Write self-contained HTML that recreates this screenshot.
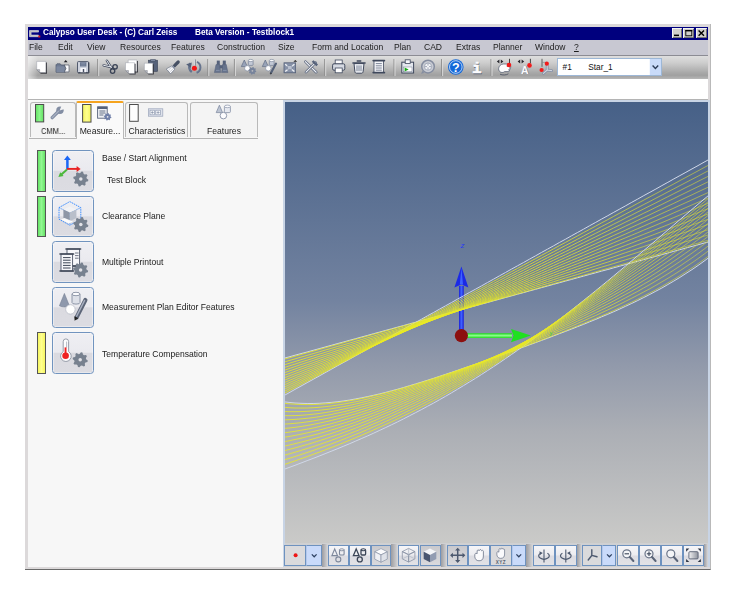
<!DOCTYPE html>
<html>
<head>
<meta charset="utf-8">
<title>Calypso User Desk</title>
<style>
html,body{margin:0;padding:0;background:#fff;}
body{width:737px;height:600px;overflow:hidden;position:relative;font-family:"Liberation Sans",sans-serif;font-size:9px;color:#222;}
.abs{position:absolute;}
.itxt,#menubar span,.tab .lbl,#title span{will-change:transform;}
#frame{left:25px;top:24px;width:686px;height:546px;background:#dcd9da;box-sizing:border-box;border-right:1px solid #b9b9b9;border-bottom:1px solid #6a6a6a;}
#title{left:28px;top:27px;width:680px;height:12.5px;background:#00007e;color:#fff;font-weight:bold;font-size:8.2px;line-height:12.5px;white-space:pre;}
#menubar{left:28px;top:39.5px;width:680px;height:15.5px;background:#c8c8d2;border-bottom:1px solid #8c8c94;}
#menubar span{position:absolute;top:.6px;line-height:15px;font-size:8.55px;color:#1c1c1c;white-space:pre;}
#toolbar{left:28px;top:56px;width:680px;height:23px;background:linear-gradient(#dedede 0%,#cdcdcd 30%,#a9a9a9 72%,#a0a0a0 84%,#b7b7b7 100%);}
#whiteband{left:28px;top:79px;width:680px;height:20px;background:#fff;border-bottom:1px solid #b4b4b4;}
#leftpanel{left:28px;top:100px;width:255.3px;height:467px;background:#f7f7f7;}
#view{left:285px;top:102px;width:423px;height:441px;background:linear-gradient(#466087 0%,#7383a0 45%,#929aab 60%,#acafb5 75%,#cacac8 100%);overflow:hidden;}
#viewborder{left:283.3px;top:100px;width:426.4px;height:467.2px;background:#c8d4e5;}
#btoolbar{left:285px;top:543px;width:423px;height:24px;background:#cfd0d2;}
.sep{position:absolute;top:3px;width:1px;height:17px;background:#8f8f8f;border-right:1px solid #e6e6e6;}
.tab{position:absolute;top:102px;height:35px;box-sizing:border-box;border:1px solid #b9b9b9;border-bottom:none;border-radius:3px 3px 0 0;background:#f4f4f4;}
.tab .lbl{position:absolute;left:0;right:0;top:19.5px;text-align:center;font-size:8.6px;line-height:11px;color:#222;}
.ind{position:absolute;width:7px;height:15px;border:1px solid #555;top:2px;}
.bar{position:absolute;left:37.5px;width:8px;border:1px solid #555;box-sizing:border-box;}
.btn{position:absolute;left:52.1px;width:42.2px;height:42px;box-sizing:border-box;border:1.4px solid #7194bf;border-radius:3.5px;background:linear-gradient(#efeff3 0%,#eaeaef 48%,#dadae0 51%,#dcdce2 100%);box-shadow:inset 0 0 0 .6px rgba(255,255,255,.7);}
.itxt{position:absolute;font-size:8.55px;line-height:11px;color:#1a1a1a;white-space:pre;}
.bb{position:absolute;top:2px;height:20px;box-sizing:border-box;border:1px solid #6e92bf;background:linear-gradient(#f5f5f8 0%,#ececf0 48%,#dcdce2 52%,#e2e2e6 100%);}
.bb.on{background:linear-gradient(#c9c9cd 0%,#d9d9dd 100%);}
.bb.dd{background:#c9dafa;border-left-color:#b4c8ec;}
.bb.flat{background:#dadadc;}
</style>
</head>
<body>
<div id="frame" class="abs"></div>
<div id="title" class="abs"><svg class="abs" style="left:.4px;top:1.2px" width="13" height="11" viewBox="0 0 13 11"><path d="M1.5 2.5h9v1.6h-7.4v3h7.4v1.6h-9z" fill="#b8b8b8" stroke="#e8e8e8" stroke-width=".6"/><rect x="10.3" y="7.5" width="2" height="2" fill="#e02020"/></svg><span class="abs" style="left:14.6px;top:0">Calypso User Desk - (C) Carl Zeiss</span><span class="abs" style="left:166.8px;top:0">Beta Version - Testblock1</span>
<div class="abs" style="left:644px;top:1.4px;width:10.20px;height:9.4px;background:#d2d0cc;box-shadow:inset .8px .8px 0 #fff, inset -.8px -.8px 0 #5a5a5a"></div>
<div class="abs" style="left:655.4px;top:1.4px;width:10.60px;height:9.4px;background:#d2d0cc;box-shadow:inset .8px .8px 0 #fff, inset -.8px -.8px 0 #5a5a5a"></div>
<div class="abs" style="left:668px;top:1.4px;width:10.60px;height:9.4px;background:#d2d0cc;box-shadow:inset .8px .8px 0 #fff, inset -.8px -.8px 0 #5a5a5a"></div>
<svg class="abs" style="left:640px;top:0" width="40" height="12.5" viewBox="668 27 40 12.5">
<rect x="674" y="34.6" width="5" height="1.5" fill="#000"/>
<rect x="685.8" y="30.4" width="6" height="5.4" fill="none" stroke="#000" stroke-width=".9"/><rect x="685.4" y="30" width="6.8" height="1.4" fill="#000"/>
<path d="M698.6 30.4l5.4 5.4M704 30.4l-5.4 5.4" stroke="#000" stroke-width="1.4"/>
</svg>
</div>
<div id="menubar" class="abs">
<span style="left:0.6px">File</span><span style="left:29.7px">Edit</span><span style="left:58.7px">View</span><span style="left:92.0px">Resources</span><span style="left:143.3px">Features</span><span style="left:188.8px">Construction</span><span style="left:249.7px">Size</span><span style="left:284.2px">Form and Location</span><span style="left:366.4px">Plan</span><span style="left:396.1px">CAD</span><span style="left:427.9px">Extras</span><span style="left:465.3px">Planner</span><span style="left:507.2px">Window</span><span style="left:546px;text-decoration:underline">?</span>
</div>
<div id="toolbar" class="abs">
<svg width="680" height="23" viewBox="28 56 680 23" style="position:absolute;left:0;top:0">
<defs><linearGradient id="lf" x1="0" x2="1" y1="0" y2="0"><stop offset="0" stop-color="#fff" stop-opacity=".55"/><stop offset="1" stop-color="#fff" stop-opacity="0"/></linearGradient></defs>
<rect x="28" y="56" width="10" height="23" fill="url(#lf)"/>
<path d="M37.80 62.5h9.2v11.2h-6.20l-3 -3z" fill="#24242c" opacity=".85"/><path d="M36.7 61.4h9.2v11.2h-6.20l-3 -3z" fill="#fff" stroke="#8a8f9c" stroke-width=".4"/><path d="M36.7 69.6h3v3z" fill="#b4b8c4" stroke="#555" stroke-width=".3"/>
<path d="M56 72.2v-7.4l1-1h3.2l1 1.2h4v7.2z" fill="#6f7b92" stroke="#4c566c" stroke-width=".7"/>
<path d="M56.4 72v-5.60h8.4v5.6z" fill="#7c889f"/>
<path d="M64.4 65h4.60v6.9h-4.60l1.6-3.4z" fill="#fbfbfd" stroke="#3c4456" stroke-width=".6"/>
<path d="M63.8 62.2l1.9-2.1 1.9 2.1z" fill="#1c1c22"/>
<rect x="77.5" y="61.6" width="11" height="11" rx=".8" fill="#cdd2dd" stroke="#454e62" stroke-width=".9"/>
<rect x="80" y="62.2" width="6.40" height="4.3" fill="#6b7892"/><path d="M81.2 63.4h4M81.2 65h4" stroke="#8f9ab0" stroke-width=".6"/>
<rect x="80.4" y="68" width="5.6" height="4.4" fill="#f6f6fa"/><rect x="82.8" y="69" width="1.4" height="3" fill="#454e62"/>
<path d="M88.9 62.4v10.6h-10.8" fill="none" stroke="#2c3240" stroke-width=".8"/>
<rect x="97.2" y="59" width="1" height="17" fill="#8d8d8d"/><rect x="98.2" y="59" width="1" height="17" fill="#e2e2e2" opacity=".8"/>
<g fill="none" stroke-linecap="round"><path d="M106.8 60.6l4.80 7.6M103.6 65.3l8.6 2" stroke="#3f485c" stroke-width="2.3"/><path d="M106.8 60.6l4.4 7M103.6 65.3l8 1.8" stroke="#e6e9ef" stroke-width="1"/><circle cx="115.1" cy="66.8" r="2.2" stroke="#3a4356" stroke-width="1.3"/><circle cx="112.6" cy="71.1" r="2.2" stroke="#3a4356" stroke-width="1.3"/></g>
<path d="M129.30 61.1h8.7v11.4h-5.70l-3 -3z" fill="#24242c" opacity=".85"/><path d="M128.2 60h8.7v11.4h-5.70l-3 -3z" fill="#fff" stroke="#8a8f9c" stroke-width=".4"/><path d="M128.2 68.4h3v3z" fill="#b4b8c4" stroke="#555" stroke-width=".3"/>
<path d="M126.6 63.80h9v10.8h-6l-3 -3z" fill="#24242c" opacity=".85"/><path d="M125.5 62.7h9v10.8h-6l-3 -3z" fill="#fff" stroke="#8a8f9c" stroke-width=".4"/><path d="M125.5 70.5h3v3z" fill="#b4b8c4" stroke="#555" stroke-width=".3"/>
<rect x="148.4" y="60.2" width="9.2" height="11.2" fill="#56627a" stroke="#3c4558" stroke-width=".6"/><rect x="150.8" y="59.4" width="4.4" height="1.9" fill="#7b879f" stroke="#3c4558" stroke-width=".4"/>
<path d="M145.5 64.3h8.4v10.3h-5.4l-3 -3z" fill="#24242c" opacity=".85"/><path d="M144.4 63.2h8.4v10.3h-5.4l-3 -3z" fill="#fff" stroke="#8a8f9c" stroke-width=".4"/><path d="M144.4 70.5h3v3z" fill="#b4b8c4" stroke="#555" stroke-width=".3"/>
<path d="M178.2 62l-3.6 3.6" stroke="#465064" stroke-width="3.2" stroke-linecap="round"/>
<path d="M172.6 65.2l2.8 2.8-1.2 1.2-2.8-2.8z" fill="#8a94a8"/>
<path d="M171.6 66l3.2 3.2-4.2 4.6-4.4-4.8z" fill="#f8f8fa" stroke="#5a6478" stroke-width=".6"/>
<path d="M168.4 70.2l3.6-3.4M170 71.8l3.4-3.4" stroke="#9aa2b2" stroke-width=".5"/>
<path d="M197 61.8a6 6 0 0 1 -.4 11" fill="none" stroke="#66748e" stroke-width="2"/>
<path d="M191.8 72a6 6 0 0 1 -1.2-8.8" fill="none" stroke="#66748e" stroke-width="2.4"/>
<path d="M186.2 64.2l5.6-1.6-1 5.4z" fill="#56627a"/>
<path d="M194.6 59.4v6.4" stroke="#e8eaee" stroke-width="1.2"/><path d="M195.3 59.4v6.4" stroke="#444c5c" stroke-width=".6"/>
<circle cx="194.4" cy="68.2" r="2.5" fill="#f21818"/>
<rect x="207.3" y="59" width="1" height="17" fill="#8d8d8d"/><rect x="208.3" y="59" width="1" height="17" fill="#e2e2e2" opacity=".8"/>
<path d="M214.4 72.6l1.6-8h3.80l.9 8z" fill="#66738c" stroke="#55617a" stroke-width=".5"/><path d="M221.6 72.6l.9-8h3.8l1.6 8z" fill="#66738c" stroke="#55617a" stroke-width=".5"/><rect x="216.8" y="60.6" width="3" height="4.2" fill="#55617a"/><rect x="222.8" y="60.6" width="3" height="4.2" fill="#55617a"/><rect x="219.6" y="65.2" width="3.2" height="3.2" fill="#55617a"/><path d="M216 70.4h3.60M223 70.4h3.6" stroke="#8c97ad" stroke-width=".8"/>
<rect x="233.9" y="59" width="1" height="17" fill="#8d8d8d"/><rect x="234.9" y="59" width="1" height="17" fill="#e2e2e2" opacity=".8"/>
<path d="M244.3 60l3 6.6h-6z" fill="#98a3b8" stroke="#56627a" stroke-width=".6"/><rect x="248.3" y="60.4" width="4.8" height="5" rx=".8" fill="#c3c9d6" stroke="#66728a" stroke-width=".6"/><ellipse cx="250.70" cy="60.5" rx="2.4" ry="1.1" fill="#fbfbfd" stroke="#66728a" stroke-width=".5"/><circle cx="247.3" cy="68.3" r="2.7" fill="#fdfdfe" stroke="#77839b" stroke-width=".6"/>
<path d="M256.28 71.18 L256.13 71.93 L255.08 72.23 L254.75 72.73 L254.87 73.81 L254.24 74.24 L253.28 73.71 L252.70 73.83 L252.02 74.68 L251.27 74.53 L250.97 73.48 L250.47 73.15 L249.39 73.27 L248.96 72.64 L249.49 71.68 L249.37 71.10 L248.52 70.42 L248.67 69.67 L249.72 69.37 L250.05 68.87 L249.93 67.79 L250.56 67.36 L251.52 67.89 L252.10 67.77 L252.78 66.92 L253.53 67.07 L253.83 68.12 L254.33 68.45 L255.41 68.33 L255.84 68.96 L255.31 69.92 L255.43 70.50z" fill="#77839b"/><circle cx="252.4" cy="70.8" r="0.90" fill="#bcbcc0"/>
<path d="M265.30 60l3 6.6h-6z" fill="#98a3b8" stroke="#56627a" stroke-width=".6"/><rect x="269.30" y="60.4" width="4.8" height="5" rx=".8" fill="#c3c9d6" stroke="#66728a" stroke-width=".6"/><ellipse cx="271.7" cy="60.5" rx="2.4" ry="1.1" fill="#fbfbfd" stroke="#66728a" stroke-width=".5"/><circle cx="268.30" cy="68.3" r="2.7" fill="#fdfdfe" stroke="#77839b" stroke-width=".6"/>
<path d="M276 63.6l-5.2 9.6" stroke="#56627a" stroke-width="2.2" stroke-linecap="round"/><path d="M270.2 74.4l.3-2 1.5.9z" fill="#333"/>
<rect x="284" y="62.8" width="11.6" height="10" fill="#8792a8" stroke="#56627a" stroke-width=".8"/><path d="M285.2 64.2l9.2 7.4M294.4 64.2l-9.2 7.4" stroke="#f0f2f6" stroke-width="1.3"/><rect x="287.6" y="65.8" width="4.4" height="3.8" fill="#b9c0ce" stroke="#66728a" stroke-width=".4"/>
<path d="M293.4 61.8l1.9-1.9 1.9 1.9z" fill="#222"/>
<path d="M305.4 61.6l10.8 10.6" stroke="#56627a" stroke-width="2.6" stroke-linecap="round"/><path d="M305.4 61.6l10.8 10.6" stroke="#eef0f4" stroke-width="1.2" stroke-linecap="round"/>
<path d="M315.6 62.6l-9.6 9.6" stroke="#56627a" stroke-width="2.6" stroke-linecap="round"/><path d="M315.6 62.6l-9.6 9.6" stroke="#eef0f4" stroke-width="1.2" stroke-linecap="round"/>
<path d="M312.6 61l4.6 4.4" stroke="#56627a" stroke-width="2.4"/>
<rect x="324.2" y="59" width="1" height="17" fill="#8d8d8d"/><rect x="325.2" y="59" width="1" height="17" fill="#e2e2e2" opacity=".8"/>
<rect x="335.2" y="60" width="7" height="4.2" fill="#fbfbfd" stroke="#3f485c" stroke-width=".8"/>
<rect x="332.6" y="63.8" width="12.2" height="6.4" rx="1.4" fill="#d5d9e2" stroke="#3f485c" stroke-width="1"/>
<rect x="335.2" y="68" width="7" height="4.8" fill="#fff" stroke="#3f485c" stroke-width=".8"/>
<path d="M354 63.6h10l-.9 8c-.2 1.4-1 1.6-2 1.6h-4.20c-1 0-1.8-.2-2-1.6z" fill="#eef0f5" stroke="#3f485c" stroke-width="1"/><path d="M353 63h12" stroke="#3f485c" stroke-width="1.6" stroke-linecap="round"/><path d="M357.2 61h3.6" stroke="#3f485c" stroke-width="1.3" stroke-linecap="round"/><path d="M357 65.4v5.8M359 65.4v5.8M361 65.4v5.8" stroke="#56627a" stroke-width=".8"/>
<rect x="374" y="60.6" width="9.6" height="12" fill="#f4f5f9" stroke="#3f485c" stroke-width=".8"/><path d="M373.2 60.6h11.2M373.2 72.6h11.2" stroke="#3f485c" stroke-width="1.7" stroke-linecap="round"/><path d="M375.8 63.6h6M375.8 65.8h6M375.8 68h6M375.8 70.2h6" stroke="#56627a" stroke-width=".75"/>
<rect x="393.5" y="59" width="1" height="17" fill="#8d8d8d"/><rect x="394.5" y="59" width="1" height="17" fill="#e2e2e2" opacity=".8"/>
<rect x="401.8" y="62.2" width="11.8" height="10.8" fill="#e4e7ee" stroke="#3f485c" stroke-width="1"/><rect x="405.2" y="59.8" width="5" height="3.8" fill="#f6f6fa" stroke="#3f485c" stroke-width=".8"/><rect x="403.4" y="67" width="8.6" height="4.8" fill="#fff" stroke="#56627a" stroke-width=".4"/><path d="M404.6 67.4l4 2.1-4 2.1z" fill="#18a818"/>
<circle cx="428" cy="66.6" r="6.3" fill="#c9ccd4" stroke="#858da0" stroke-width="1.5"/><circle cx="428" cy="66.6" r="3.6" fill="#f2f3f6" stroke="#8d95a8" stroke-width=".7"/><path d="M428 63.4v6.4M424.8 66.6h6.4" stroke="#8d95a8" stroke-width=".8"/><circle cx="428" cy="66.6" r="1" fill="#fff"/><path d="M422.6 70.8l-1.6 3 3.2-.8z" fill="#858da0"/>
<rect x="441.1" y="59" width="1" height="17" fill="#8d8d8d"/><rect x="442.1" y="59" width="1" height="17" fill="#e2e2e2" opacity=".8"/>
<circle cx="455.8" cy="67" r="7.8" fill="#1468d8"/><circle cx="455.8" cy="67" r="6.3" fill="none" stroke="#fff" stroke-width=".7"/>
<text x="455.8" y="71.6" font-family="Liberation Sans, sans-serif" font-weight="bold" font-size="12.5" fill="#fff" text-anchor="middle">?</text>
<text x="477.5" y="73.6" font-family="Liberation Mono, monospace" font-weight="bold" font-size="15.5" fill="#596275" stroke="#596275" stroke-width=".7" text-anchor="middle">i</text>
<text x="476.8" y="73" font-family="Liberation Mono, monospace" font-weight="bold" font-size="15.5" fill="#fcfcfe" stroke="#fcfcfe" stroke-width=".7" text-anchor="middle">i</text>
<rect x="490.5" y="59" width="1" height="17" fill="#8d8d8d"/><rect x="491.5" y="59" width="1" height="17" fill="#e2e2e2" opacity=".8"/>
<path d="M496.8 61.6l2.6-2v4zM503.40 61.6l-2.6-2v4z" fill="#2a2a30"/>
<path d="M509.5 58.8v4.4" stroke="#333" stroke-width=".9"/>
<path d="M498.6 68.8c0-2.6 2-4.80 5-4.80h5.8c1.4 0 1.4 2 0 2h-2.60h3.2c1.2 0 1.2 1.9 0 1.9h-.6c1.2 0 1.2 1.9 0 1.9h-.8c1 0 1 1.8 0 1.8h-4c-1.40 1.6-6 1.2-6-2.8z" fill="#fdfdfe" stroke="#4a5468" stroke-width=".7"/>
<path d="M500 74.2c2.4 1.2 6.4 1 8.4-.4" stroke="#3a4254" stroke-width="1" fill="none" opacity=".7"/>
<circle cx="509" cy="65" r="2.3" fill="#f21a1a"/>
<path d="M517.6 61.6l2.6-2v4zM524.2 61.6l-2.6-2v4z" fill="#2a2a30"/>
<path d="M530.4 58.8v4.4" stroke="#333" stroke-width=".9"/>
<text x="525.4" y="74.2" font-family="Liberation Sans, sans-serif" font-weight="bold" font-size="10.5" fill="#5a6478" text-anchor="middle">A</text>
<text x="524.9" y="73.6" font-family="Liberation Sans, sans-serif" font-weight="bold" font-size="10.5" fill="#fbfbfd" text-anchor="middle">A</text>
<circle cx="529.5" cy="65.4" r="2.3" fill="#f21a1a"/>
<path d="M542 58.8v8" stroke="#444" stroke-width=".8"/><path d="M542 62.4h4" stroke="#888" stroke-width=".7"/>
<path d="M547.2 65.4v4.6l-3.8 3.4M547.2 70l4.4 .6" fill="none" stroke="#8791a6" stroke-width="2.8" stroke-linecap="round" stroke-linejoin="round"/>
<path d="M547.2 65.4v4.6l-3.8 3.4M547.2 70l4.4 .6" fill="none" stroke="#cfd4de" stroke-width="1.1" stroke-linecap="round" stroke-linejoin="round"/>
<circle cx="546.8" cy="63.7" r="2.1" fill="#f21a1a"/><circle cx="541.6" cy="70" r="2.1" fill="#f21a1a"/>
<rect x="557.5" y="58.5" width="104" height="17" fill="#fff" stroke="#9db7d6" stroke-width="1"/>
<rect x="649.8" y="59" width="11.2" height="16" fill="#c9dbf9"/>
<path d="M652.6 65.6l2.8 2.8 2.8-2.8" fill="none" stroke="#2a3b55" stroke-width="1.4"/>
<text x="562.6" y="70.2" font-family="Liberation Sans, sans-serif" font-size="8.3" fill="#111">#1</text>
<text x="588.2" y="70" font-family="Liberation Sans, sans-serif" font-size="8.3" fill="#111">Star_1</text>
</svg>
</div>
<div id="whiteband" class="abs"></div>
<div id="viewborder" class="abs"></div>
<div id="leftpanel" class="abs"></div>
<div class="abs" style="left:29px;top:137.5px;width:229px;height:1px;background:#b4b4b4"></div>
<div class="tab" style="left:30px;width:46px"><div class="lbl" style="top:23px;transform:scaleX(.88);transform-origin:52% 50%">CMM...</div></div>
<div class="tab" style="left:76.2px;width:48.0px;top:101px;height:38px;background:#fafafa;border-top:2.4px solid #f5a41f;border-radius:2px 2px 0 0"><div class="lbl" style="top:22.6px">Measure...</div></div>
<div class="tab" style="left:124.5px;width:63.90px"><div class="lbl" style="top:23px">Characteristics</div></div>
<div class="tab" style="left:190px;width:68px"><div class="lbl" style="top:23px">Features</div></div>
<svg class="abs" style="left:28px;top:100px" width="256" height="40" viewBox="28 100 256 40">
<defs><linearGradient id="gg" x1="0" x2="1"><stop offset="0" stop-color="#62e062"/><stop offset=".5" stop-color="#8cf58c"/><stop offset="1" stop-color="#62e062"/></linearGradient>
<linearGradient id="yy" x1="0" x2="1"><stop offset="0" stop-color="#f4f45e"/><stop offset=".5" stop-color="#ffff8c"/><stop offset="1" stop-color="#f4f45e"/></linearGradient></defs>
<rect x="35.5" y="104.5" width="8.2" height="17.4" fill="url(#gg)" stroke="#4c4c4c" stroke-width="1"/>
<rect x="82.6" y="104.5" width="8.4" height="17.6" fill="url(#yy)" stroke="#4c4c4c" stroke-width="1"/>
<rect x="129.6" y="104.5" width="8.6" height="16.8" fill="#fdfdfd" stroke="#4c4c4c" stroke-width="1"/>
<path d="M52.2 117.6l6.4-6.4" stroke="#828da3" stroke-width="3.4" stroke-linecap="round"/>
<circle cx="60" cy="110.2" r="3.7" fill="#828da3"/>
<path d="M59.6 110.6l2.2-5.4 3.6 3.6z" fill="#f4f4f4"/>
<path d="M52.2 117.6l6.4-6.4" stroke="#aab3c4" stroke-width="1.2" stroke-linecap="round"/>
<rect x="97.6" y="106.8" width="9.6" height="11.4" fill="#eef0f4" stroke="#56627a" stroke-width=".9"/><rect x="97.6" y="106.8" width="9.6" height="2.2" fill="#56627a"/><path d="M99.4 111h6M99.4 113h6M99.4 115h4" stroke="#56627a" stroke-width=".9"/>
<path d="M111.38 117.17 L111.24 117.90 L110.21 118.20 L109.89 118.68 L110.01 119.74 L109.39 120.15 L108.46 119.64 L107.89 119.75 L107.23 120.58 L106.50 120.44 L106.20 119.41 L105.72 119.09 L104.66 119.21 L104.25 118.59 L104.76 117.66 L104.65 117.09 L103.82 116.43 L103.96 115.70 L104.99 115.40 L105.31 114.92 L105.19 113.86 L105.81 113.45 L106.74 113.96 L107.31 113.85 L107.97 113.02 L108.70 113.16 L109.00 114.19 L109.48 114.51 L110.54 114.39 L110.95 115.01 L110.44 115.94 L110.55 116.51z" fill="#6f7fa8"/><circle cx="107.6" cy="116.8" r="0.87" fill="#e8e8ec"/>
<rect x="148.6" y="108.8" width="14.2" height="7.4" fill="#dfe3ec" stroke="#97a2b8" stroke-width=".7"/><rect x="150" y="110.2" width="4.6" height="4.6" fill="#f6f7fa" stroke="#8893ab" stroke-width=".6"/><rect x="155.8" y="110.2" width="4.6" height="4.6" fill="#f6f7fa" stroke="#8893ab" stroke-width=".6"/><path d="M152.3 111v3M150.8 112.5h3M158.1 111v3M156.6 112.5h3" stroke="#7a86a0" stroke-width=".6"/>
<path d="M219.4 105.2l3.2 7.4h-6.4z" fill="#bcc4d2" stroke="#77839b" stroke-width=".7"/>
<rect x="224.4" y="106.2" width="6" height="6.4" rx="1" fill="#e6e9f0" stroke="#77839b" stroke-width=".7"/><ellipse cx="227.4" cy="106.4" rx="3" ry="1.3" fill="#fafafc" stroke="#77839b" stroke-width=".6"/>
<circle cx="223.4" cy="115.6" r="3.3" fill="#fcfcfe" stroke="#77839b" stroke-width=".8"/>
</svg>
<div class="bar" style="top:150px;height:41.6px;left:36.6px;width:9.4px;background:linear-gradient(90deg,#66e266,#92f792 50%,#66e266)"></div>
<div class="btn" style="top:150px;height:41.6px"></div>
<div class="bar" style="top:195.6px;height:41.6px;left:36.6px;width:9.4px;background:linear-gradient(90deg,#66e266,#92f792 50%,#66e266)"></div>
<div class="btn" style="top:195.6px;height:41.6px"></div>
<div class="btn" style="top:241.2px;height:41.6px"></div>
<div class="btn" style="top:286.6px;height:41.6px"></div>
<div class="bar" style="top:332.3px;height:41.6px;left:36.6px;width:9.4px;background:linear-gradient(90deg,#f6f660,#ffff90 50%,#f6f660)"></div>
<div class="btn" style="top:332.3px;height:41.6px"></div>
<div class="itxt" style="left:102px;top:152.9px">Base / Start Alignment</div>
<div class="itxt" style="left:106.6px;top:174.5px">Test Block</div>
<div class="itxt" style="left:102px;top:211.0px">Clearance Plane</div>
<div class="itxt" style="left:102px;top:256.5px">Multiple Printout</div>
<div class="itxt" style="left:102px;top:302.1px">Measurement Plan Editor Features</div>
<div class="itxt" style="left:102px;top:348.5px">Temperature Compensation</div>
<svg class="abs" style="left:50px;top:148px" width="48" height="230" viewBox="50 148 48 230">
<path d="M67.4 169.4v-10" stroke="#1a66f6" stroke-width="2.5"/><path d="M64 160l3.4-4.4 3.4 4.4z" fill="#1a66f6"/>
<path d="M67 168.9h10" stroke="#e82222" stroke-width="1.9"/><path d="M76.6 165.9l4 3-4 3z" fill="#e82222"/>
<path d="M67 169.6l-5.6 4.8" stroke="#4cb83c" stroke-width="2"/><path d="M58.4 177l1.8-4.8 3.4 3.8z" fill="#4cb83c"/>
<path d="M88.36 179.74 L88.07 181.21 L86.03 181.79 L85.38 182.76 L85.62 184.87 L84.38 185.70 L82.52 184.67 L81.38 184.90 L80.06 186.56 L78.59 186.27 L78.01 184.23 L77.04 183.58 L74.93 183.82 L74.10 182.58 L75.13 180.72 L74.90 179.58 L73.24 178.26 L73.53 176.79 L75.57 176.21 L76.22 175.24 L75.98 173.13 L77.22 172.30 L79.08 173.33 L80.22 173.10 L81.54 171.44 L83.01 171.73 L83.59 173.77 L84.56 174.42 L86.67 174.18 L87.50 175.42 L86.47 177.28 L86.70 178.42z" fill="#77818f"/><circle cx="80.8" cy="179" r="1.75" fill="#e2e2e7"/>
<path d="M59 207.6l10.8-6 11 6v11.6l-11 6-10.8-6z" fill="none" stroke="#2f86ff" stroke-width=".9" stroke-dasharray="1.6 .8"/>
<path d="M59 207.6l10.8 5.4 11-5.4M69.8 213v12" fill="none" stroke="#2f86ff" stroke-width=".7" stroke-dasharray="1.6 .8"/>
<path d="M63.4 209.6l6.4-3 6.6 3-6.6 3z" fill="#f2f3f6"/><path d="M63.4 209.6l6.4 3v8.6l-6.4-3.2z" fill="#8f97a6"/><path d="M69.8 212.6l6.6-3v8.4l-6.60 3.2z" fill="#b9bfca"/>
<path d="M61 219.6l8 4 4-2-8.4-3.6z" fill="#fff" opacity=".9"/>
<path d="M88.36 225.34 L88.07 226.81 L86.03 227.39 L85.38 228.36 L85.62 230.47 L84.38 231.30 L82.52 230.27 L81.38 230.50 L80.06 232.16 L78.59 231.87 L78.01 229.83 L77.04 229.18 L74.93 229.42 L74.10 228.18 L75.13 226.32 L74.90 225.18 L73.24 223.86 L73.53 222.39 L75.57 221.81 L76.22 220.84 L75.98 218.73 L77.22 217.90 L79.08 218.93 L80.22 218.70 L81.54 217.04 L83.01 217.33 L83.59 219.37 L84.56 220.02 L86.67 219.78 L87.50 221.02 L86.47 222.88 L86.70 224.02z" fill="#77818f"/><circle cx="80.8" cy="224.6" r="1.75" fill="#e2e2e7"/>
<rect x="67" y="249" width="12.6" height="17" fill="#f6f7fa" stroke="#4e5668" stroke-width=".9"/><path d="M66 249h14.6M66 266h14.6" stroke="#3e4656" stroke-width="1.6" stroke-linecap="round"/>
<path d="M75 253h3.60M75 255.6h3.6M75 258.2h3.6" stroke="#4e5668" stroke-width=".8"/>
<rect x="61" y="254" width="11.6" height="17" fill="#f6f7fa" stroke="#4e5668" stroke-width=".9"/><path d="M60 254h13.6M60 271h13.6" stroke="#3e4656" stroke-width="1.6" stroke-linecap="round"/>
<path d="M63 257.6h7.6M63 260.2h7.6M63 262.8h7.6M63 265.4h7.6M63 268h7.6" stroke="#3e4656" stroke-width="1"/>
<path d="M88.16 270.74 L87.87 272.21 L85.83 272.79 L85.18 273.76 L85.42 275.87 L84.18 276.70 L82.32 275.67 L81.18 275.90 L79.86 277.56 L78.39 277.27 L77.81 275.23 L76.84 274.58 L74.73 274.82 L73.90 273.58 L74.93 271.72 L74.70 270.58 L73.04 269.26 L73.33 267.79 L75.37 267.21 L76.02 266.24 L75.78 264.13 L77.02 263.30 L78.88 264.33 L80.02 264.10 L81.34 262.44 L82.81 262.73 L83.39 264.77 L84.36 265.42 L86.47 265.18 L87.30 266.42 L86.27 268.28 L86.50 269.42z" fill="#77818f"/><circle cx="80.6" cy="270" r="1.75" fill="#e2e2e7"/>
<path d="M64.4 293.4l5 12.4c-2.6 1.6-7 1.6-10 0z" fill="#8e98ac" stroke="#6a7488" stroke-width=".5"/>
<path d="M72 294v8.6a4 1.5 0 0 0 8 0v-8.6z" fill="#dde0e8" stroke="#7a8498" stroke-width=".8"/><ellipse cx="76" cy="294" rx="4" ry="1.7" fill="#fcfcfe" stroke="#7a8498" stroke-width=".8"/>
<path d="M85.4 300l-8.8 17.4" stroke="#5c6578" stroke-width="4.2" stroke-linecap="round"/><path d="M84.6 300.4l-8 15.8" stroke="#a8b0c0" stroke-width="1.4" stroke-linecap="round"/><path d="M74.4 316.2l4 2-3.80 2.6z" fill="#222"/>
<circle cx="70.4" cy="309.4" r="4.7" fill="#fff" stroke="#b4b9c4" stroke-width=".7"/>
<path d="M63.2 351.6v-10a2.7 2.7 0 0 1 5.4 0v10a5.3 5.3 0 1 1-5.4 0z" fill="#fdfdfe" stroke="#8c93a0" stroke-width=".9"/>
<path d="M66.60 341.6v6" stroke="#9aa1ae" stroke-width=".7"/>
<circle cx="65.6" cy="355.8" r="3.3" fill="#ee2222"/><rect x="64.6" y="347.4" width="1.9" height="7" fill="#ee2222"/>
<path d="M87.76 360.54 L87.47 362.01 L85.43 362.59 L84.78 363.56 L85.02 365.67 L83.78 366.50 L81.92 365.47 L80.78 365.70 L79.46 367.36 L77.99 367.07 L77.41 365.03 L76.44 364.38 L74.33 364.62 L73.50 363.38 L74.53 361.52 L74.30 360.38 L72.64 359.06 L72.93 357.59 L74.97 357.01 L75.62 356.04 L75.38 353.93 L76.62 353.10 L78.48 354.13 L79.62 353.90 L80.94 352.24 L82.41 352.53 L82.99 354.57 L83.96 355.22 L86.07 354.98 L86.90 356.22 L85.87 358.08 L86.10 359.22z" fill="#77818f"/><circle cx="80.2" cy="359.8" r="1.75" fill="#e2e2e7"/>
</svg>
<div id="view" class="abs">
<svg width="423" height="441" viewBox="0 0 423 441" style="position:absolute;left:0;top:0">
<defs><linearGradient id="bl" x1="0" x2="1"><stop offset="0" stop-color="#1a20d8"/><stop offset=".5" stop-color="#3f63ff"/><stop offset="1" stop-color="#1a20d8"/></linearGradient>
<linearGradient id="gr" x1="0" x2="0" y1="0" y2="1"><stop offset="0" stop-color="#1fd81f"/><stop offset=".5" stop-color="#8cff8c"/><stop offset="1" stop-color="#1fd81f"/></linearGradient></defs>
<rect x="174.00" y="184" width="4.8" height="49.60" fill="url(#bl)"/>
<path d="M176.40 164.40L183.40 185.5L176.40 182.5L169.40 185.5z" fill="#1c2ae6"/>
<path d="M176.40 166L178.00 182.5L174.80 182.5z" fill="#3d63ff"/>
<rect x="176.40" y="231.20" width="50.60" height="4.8" fill="url(#gr)"/>
<path d="M245.80 233.60L226 227.00L228.5 233.60L226 240.20z" fill="#20e020"/>
<defs><linearGradient id="yg" gradientUnits="userSpaceOnUse" x1="0" y1="0" x2="423" y2="0"><stop offset="0" stop-color="#ecec20"/><stop offset=".6" stop-color="#e8e826"/><stop offset="1" stop-color="#cfd23e" stop-opacity=".78"/></linearGradient></defs>
<g stroke="#d0d8e8" stroke-width="1.0" fill="none"><path d="M-2.0 256.5L4.0 254.9L10.0 253.2L16.0 251.6L22.1 250.0L28.1 248.3L34.1 246.7L40.1 245.0L46.1 243.4L52.1 241.7L58.1 240.1L64.2 238.4L70.2 236.8L76.2 235.1L82.2 233.5L88.2 231.8L94.2 230.2L100.2 228.5L106.3 226.9L112.3 225.2L118.3 223.6L124.3 221.9L130.3 220.3L136.3 218.6L142.3 217.0L148.4 215.3L154.4 213.7L160.4 212.0L166.4 210.4L172.4 208.7L178.4 207.1L184.4 205.4L190.5 203.8L196.5 202.1L202.5 200.5L208.5 198.8L214.5 197.2L220.5 195.5L226.5 193.9L232.5 192.2L238.6 190.6L244.6 188.9L250.6 187.3L256.6 185.6L262.6 184.0L268.6 182.3L274.6 180.7L280.7 179.0L286.7 177.4L292.7 175.7L298.7 174.1L304.7 172.4L310.7 170.8L316.7 169.1L322.8 167.5L328.8 165.8L334.8 164.2L340.8 162.5L346.8 160.9L352.8 159.2L358.8 157.6L364.9 155.9L370.9 154.3L376.9 152.6L382.9 151.0L388.9 149.3L394.9 147.7L400.9 146.0L407.0 144.4L413.0 142.8L419.0 141.1L425.0 139.5"/><path d="M-2.0 294.1L4.0 290.8L10.0 287.4L16.0 284.1L22.1 280.7L28.1 277.4L34.1 274.1L40.1 270.7L46.1 267.4L52.1 264.0L58.1 260.7L64.2 257.4L70.2 254.0L76.2 250.7L82.2 247.3L88.2 244.0L94.2 240.7L100.2 237.3L106.3 234.0L112.3 230.6L118.3 227.3L124.3 223.9L130.3 220.6L136.3 217.3L142.3 213.9L148.4 210.6L154.4 207.2L160.4 203.9L166.4 200.6L172.4 197.2L178.4 193.9L184.4 190.5L190.5 187.2L196.5 183.9L202.5 180.5L208.5 177.2L214.5 173.8L220.5 170.5L226.5 167.1L232.5 163.8L238.6 160.5L244.6 157.1L250.6 153.8L256.6 150.4L262.6 147.1L268.6 143.8L274.6 140.4L280.7 137.1L286.7 133.7L292.7 130.4L298.7 127.1L304.7 123.7L310.7 120.4L316.7 117.0L322.8 113.7L328.8 110.3L334.8 107.0L340.8 103.7L346.8 100.3L352.8 97.0L358.8 93.6L364.9 90.3L370.9 87.0L376.9 83.6L382.9 80.3L388.9 76.9L394.9 73.6L400.9 70.3L407.0 66.9L413.0 63.6L419.0 60.2L425.0 56.9"/></g>
<g stroke="url(#yg)" stroke-width="0.8" fill="none"><path d="M-2.0 257.5L4.0 255.9L10.0 254.2L16.0 252.5L22.1 250.8L28.1 249.2L34.1 247.5L40.1 245.8L46.1 244.1L52.1 242.5L58.1 240.8L64.2 239.1L70.2 237.4L76.2 235.8L82.2 234.1L88.2 232.4L94.2 230.8L100.2 229.1L106.3 227.4L112.3 225.7L118.3 224.0L124.3 222.3L130.3 220.7L136.3 219.0L142.3 217.3L148.4 215.6L154.4 213.9L160.4 212.2L166.4 210.5L172.4 208.8L178.4 207.1L184.4 205.4L190.5 203.7L196.5 202.0L202.5 200.3L208.5 198.6L214.5 196.9L220.5 195.2L226.5 193.6L232.5 191.9L238.6 190.2L244.6 188.5L250.6 186.8L256.6 185.1L262.6 183.4L268.6 181.7L274.6 180.0L280.7 178.3L286.7 176.6L292.7 174.9L298.7 173.2L304.7 171.5L310.7 169.8L316.7 168.1L322.8 166.4L328.8 164.7L334.8 163.1L340.8 161.4L346.8 159.7L352.8 158.0L358.8 156.3L364.9 154.6L370.9 152.9L376.9 151.2L382.9 149.5L388.9 147.8L394.9 146.1L400.9 144.4L407.0 142.8L413.0 141.1L419.0 139.4L425.0 137.7"/><path d="M-2.0 260.4L4.0 258.6L10.0 256.9L16.0 255.1L22.1 253.4L28.1 251.6L34.1 249.9L40.1 248.1L46.1 246.4L52.1 244.6L58.1 242.9L64.2 241.2L70.2 239.4L76.2 237.7L82.2 235.9L88.2 234.2L94.2 232.4L100.2 230.7L106.3 228.9L112.3 227.1L118.3 225.3L124.3 223.5L130.3 221.7L136.3 219.9L142.3 218.1L148.4 216.3L154.4 214.5L160.4 212.7L166.4 210.9L172.4 209.1L178.4 207.2L184.4 205.4L190.5 203.5L196.5 201.7L202.5 199.9L208.5 198.0L214.5 196.2L220.5 194.4L226.5 192.5L232.5 190.7L238.6 188.8L244.6 187.0L250.6 185.2L256.6 183.3L262.6 181.5L268.6 179.7L274.6 177.8L280.7 176.0L286.7 174.2L292.7 172.4L298.7 170.5L304.7 168.7L310.7 166.9L316.7 165.1L322.8 163.3L328.8 161.5L334.8 159.6L340.8 157.8L346.8 156.0L352.8 154.2L358.8 152.4L364.9 150.6L370.9 148.8L376.9 146.9L382.9 145.1L388.9 143.3L394.9 141.5L400.9 139.7L407.0 137.9L413.0 136.0L419.0 134.2L425.0 132.4"/><path d="M-2.0 263.2L4.0 261.4L10.0 259.5L16.0 257.7L22.1 255.8L28.1 254.0L34.1 252.2L40.1 250.4L46.1 248.5L52.1 246.7L58.1 244.9L64.2 243.1L70.2 241.2L76.2 239.4L82.2 237.6L88.2 235.8L94.2 233.9L100.2 232.1L106.3 230.2L112.3 228.4L118.3 226.5L124.3 224.5L130.3 222.6L136.3 220.7L142.3 218.8L148.4 216.9L154.4 215.0L160.4 213.1L166.4 211.1L172.4 209.2L178.4 207.2L184.4 205.2L190.5 203.2L196.5 201.3L202.5 199.3L208.5 197.3L214.5 195.3L220.5 193.4L226.5 191.4L232.5 189.4L238.6 187.4L244.6 185.5L250.6 183.5L256.6 181.5L262.6 179.5L268.6 177.6L274.6 175.6L280.7 173.7L286.7 171.7L292.7 169.8L298.7 167.8L304.7 165.9L310.7 164.0L316.7 162.0L322.8 160.1L328.8 158.1L334.8 156.2L340.8 154.3L346.8 152.3L352.8 150.4L358.8 148.4L364.9 146.5L370.9 144.6L376.9 142.6L382.9 140.7L388.9 138.7L394.9 136.8L400.9 134.9L407.0 132.9L413.0 131.0L419.0 129.1L425.0 127.1"/><path d="M-2.0 266.0L4.0 264.0L10.0 262.1L16.0 260.1L22.1 258.2L28.1 256.3L34.1 254.4L40.1 252.5L46.1 250.6L52.1 248.7L58.1 246.8L64.2 244.9L70.2 243.0L76.2 241.0L82.2 239.1L88.2 237.2L94.2 235.3L100.2 233.4L106.3 231.4L112.3 229.4L118.3 227.4L124.3 225.4L130.3 223.4L136.3 221.4L142.3 219.4L148.4 217.4L154.4 215.3L160.4 213.3L166.4 211.2L172.4 209.1L178.4 207.0L184.4 204.9L190.5 202.8L196.5 200.7L202.5 198.6L208.5 196.5L214.5 194.4L220.5 192.2L226.5 190.1L232.5 188.0L238.6 185.9L244.6 183.8L250.6 181.7L256.6 179.6L262.6 177.5L268.6 175.4L274.6 173.3L280.7 171.2L286.7 169.2L292.7 167.1L298.7 165.0L304.7 163.0L310.7 160.9L316.7 158.9L322.8 156.8L328.8 154.8L334.8 152.7L340.8 150.6L346.8 148.6L352.8 146.5L358.8 144.5L364.9 142.4L370.9 140.3L376.9 138.3L382.9 136.2L388.9 134.2L394.9 132.1L400.9 130.0L407.0 128.0L413.0 125.9L419.0 123.9L425.0 121.8"/><path d="M-2.0 268.7L4.0 266.6L10.0 264.6L16.0 262.5L22.1 260.5L28.1 258.5L34.1 256.5L40.1 254.5L46.1 252.5L52.1 250.5L58.1 248.5L64.2 246.5L70.2 244.5L76.2 242.5L82.2 240.5L88.2 238.5L94.2 236.5L100.2 234.5L106.3 232.5L112.3 230.4L118.3 228.3L124.3 226.1L130.3 224.0L136.3 221.9L142.3 219.8L148.4 217.6L154.4 215.5L160.4 213.3L166.4 211.1L172.4 208.9L178.4 206.7L184.4 204.4L190.5 202.2L196.5 200.0L202.5 197.7L208.5 195.5L214.5 193.3L220.5 191.0L226.5 188.8L232.5 186.6L238.6 184.3L244.6 182.1L250.6 179.9L256.6 177.6L262.6 175.4L268.6 173.2L274.6 171.0L280.7 168.8L286.7 166.6L292.7 164.4L298.7 162.2L304.7 160.0L310.7 157.9L316.7 155.7L322.8 153.5L328.8 151.3L334.8 149.1L340.8 147.0L346.8 144.8L352.8 142.6L358.8 140.4L364.9 138.3L370.9 136.1L376.9 133.9L382.9 131.7L388.9 129.6L394.9 127.4L400.9 125.2L407.0 123.0L413.0 120.8L419.0 118.7L425.0 116.5"/><path d="M-2.0 271.3L4.0 269.1L10.0 267.0L16.0 264.9L22.1 262.8L28.1 260.7L34.1 258.6L40.1 256.5L46.1 254.4L52.1 252.3L58.1 250.2L64.2 248.1L70.2 246.0L76.2 243.9L82.2 241.8L88.2 239.7L94.2 237.6L100.2 235.5L106.3 233.3L112.3 231.2L118.3 228.9L124.3 226.7L130.3 224.5L136.3 222.2L142.3 220.0L148.4 217.8L154.4 215.5L160.4 213.2L166.4 210.9L172.4 208.6L178.4 206.2L184.4 203.8L190.5 201.5L196.5 199.1L202.5 196.8L208.5 194.4L214.5 192.1L220.5 189.7L226.5 187.3L232.5 185.0L238.6 182.6L244.6 180.3L250.6 177.9L256.6 175.6L262.6 173.2L268.6 170.9L274.6 168.5L280.7 166.2L286.7 163.9L292.7 161.6L298.7 159.3L304.7 157.0L310.7 154.7L316.7 152.4L322.8 150.1L328.8 147.8L334.8 145.6L340.8 143.3L346.8 141.0L352.8 138.7L358.8 136.4L364.9 134.1L370.9 131.8L376.9 129.5L382.9 127.2L388.9 124.9L394.9 122.6L400.9 120.3L407.0 118.0L413.0 115.7L419.0 113.5L425.0 111.2"/><path d="M-2.0 273.8L4.0 271.6L10.0 269.3L16.0 267.1L22.1 264.9L28.1 262.7L34.1 260.5L40.1 258.3L46.1 256.2L52.1 254.0L58.1 251.8L64.2 249.6L70.2 247.4L76.2 245.2L82.2 243.0L88.2 240.8L94.2 238.6L100.2 236.3L106.3 234.1L112.3 231.8L118.3 229.5L124.3 227.1L130.3 224.8L136.3 222.4L142.3 220.1L148.4 217.7L154.4 215.3L160.4 212.9L166.4 210.5L172.4 208.1L178.4 205.6L184.4 203.1L190.5 200.6L196.5 198.2L202.5 195.7L208.5 193.2L214.5 190.7L220.5 188.3L226.5 185.8L232.5 183.3L238.6 180.8L244.6 178.4L250.6 175.9L256.6 173.4L262.6 170.9L268.6 168.5L274.6 166.0L280.7 163.6L286.7 161.2L292.7 158.8L298.7 156.4L304.7 154.0L310.7 151.5L316.7 149.1L322.8 146.7L328.8 144.3L334.8 141.9L340.8 139.5L346.8 137.1L352.8 134.7L358.8 132.3L364.9 129.9L370.9 127.5L376.9 125.1L382.9 122.7L388.9 120.2L394.9 117.8L400.9 115.4L407.0 113.0L413.0 110.6L419.0 108.2L425.0 105.8"/><path d="M-2.0 276.3L4.0 274.0L10.0 271.6L16.0 269.3L22.1 267.0L28.1 264.7L34.1 262.4L40.1 260.1L46.1 257.8L52.1 255.5L58.1 253.2L64.2 250.9L70.2 248.6L76.2 246.3L82.2 244.0L88.2 241.7L94.2 239.4L100.2 237.0L106.3 234.7L112.3 232.3L118.3 229.8L124.3 227.4L130.3 224.9L136.3 222.5L142.3 220.0L148.4 217.5L154.4 215.1L160.4 212.5L166.4 210.0L172.4 207.4L178.4 204.9L184.4 202.3L190.5 199.7L196.5 197.1L202.5 194.5L208.5 191.9L214.5 189.3L220.5 186.7L226.5 184.1L232.5 181.5L238.6 179.0L244.6 176.4L250.6 173.8L256.6 171.2L262.6 168.6L268.6 166.0L274.6 163.5L280.7 160.9L286.7 158.4L292.7 155.9L298.7 153.3L304.7 150.8L310.7 148.3L316.7 145.8L322.8 143.3L328.8 140.7L334.8 138.2L340.8 135.7L346.8 133.2L352.8 130.7L358.8 128.1L364.9 125.6L370.9 123.1L376.9 120.6L382.9 118.1L388.9 115.5L394.9 113.0L400.9 110.5L407.0 108.0L413.0 105.5L419.0 103.0L425.0 100.5"/><path d="M-2.0 278.8L4.0 276.3L10.0 273.8L16.0 271.4L22.1 269.0L28.1 266.6L34.1 264.2L40.1 261.8L46.1 259.4L52.1 256.9L58.1 254.5L64.2 252.1L70.2 249.7L76.2 247.3L82.2 244.9L88.2 242.5L94.2 240.0L100.2 237.6L106.3 235.1L112.3 232.6L118.3 230.1L124.3 227.5L130.3 224.9L136.3 222.3L142.3 219.8L148.4 217.2L154.4 214.6L160.4 212.0L166.4 209.3L172.4 206.7L178.4 204.0L184.4 201.3L190.5 198.6L196.5 195.9L202.5 193.2L208.5 190.5L214.5 187.8L220.5 185.1L226.5 182.4L232.5 179.7L238.6 177.0L244.6 174.3L250.6 171.6L256.6 168.9L262.6 166.2L268.6 163.5L274.6 160.8L280.7 158.2L286.7 155.5L292.7 152.9L298.7 150.3L304.7 147.6L310.7 145.0L316.7 142.4L322.8 139.7L328.8 137.1L334.8 134.5L340.8 131.9L346.8 129.2L352.8 126.6L358.8 124.0L364.9 121.3L370.9 118.7L376.9 116.1L382.9 113.5L388.9 110.8L394.9 108.2L400.9 105.6L407.0 102.9L413.0 100.3L419.0 97.7L425.0 95.1"/><path d="M-2.0 281.2L4.0 278.6L10.0 276.0L16.0 273.4L22.1 270.9L28.1 268.4L34.1 265.9L40.1 263.3L46.1 260.8L52.1 258.3L58.1 255.7L64.2 253.2L70.2 250.7L76.2 248.2L82.2 245.6L88.2 243.1L94.2 240.6L100.2 238.0L106.3 235.4L112.3 232.8L118.3 230.1L124.3 227.4L130.3 224.8L136.3 222.1L142.3 219.4L148.4 216.7L154.4 214.0L160.4 211.3L166.4 208.5L172.4 205.7L178.4 202.9L184.4 200.1L190.5 197.3L196.5 194.5L202.5 191.7L208.5 188.9L214.5 186.1L220.5 183.3L226.5 180.5L232.5 177.7L238.6 174.9L244.6 172.1L250.6 169.3L256.6 166.5L262.6 163.7L268.6 160.9L274.6 158.1L280.7 155.4L286.7 152.6L292.7 149.9L298.7 147.1L304.7 144.4L310.7 141.7L316.7 138.9L322.8 136.2L328.8 133.4L334.8 130.7L340.8 128.0L346.8 125.2L352.8 122.5L358.8 119.8L364.9 117.0L370.9 114.3L376.9 111.5L382.9 108.8L388.9 106.1L394.9 103.3L400.9 100.6L407.0 97.9L413.0 95.1L419.0 92.4L425.0 89.7"/><path d="M-2.0 283.5L4.0 280.8L10.0 278.1L16.0 275.4L22.1 272.8L28.1 270.1L34.1 267.5L40.1 264.8L46.1 262.1L52.1 259.5L58.1 256.8L64.2 254.2L70.2 251.5L76.2 248.9L82.2 246.2L88.2 243.6L94.2 240.9L100.2 238.2L106.3 235.5L112.3 232.8L118.3 230.0L124.3 227.2L130.3 224.4L136.3 221.7L142.3 218.9L148.4 216.1L154.4 213.3L160.4 210.4L166.4 207.6L172.4 204.7L178.4 201.8L184.4 198.9L190.5 196.0L196.5 193.1L202.5 190.2L208.5 187.3L214.5 184.4L220.5 181.4L226.5 178.5L232.5 175.6L238.6 172.7L244.6 169.8L250.6 166.9L256.6 164.0L262.6 161.1L268.6 158.2L274.6 155.3L280.7 152.5L286.7 149.6L292.7 146.8L298.7 143.9L304.7 141.1L310.7 138.2L316.7 135.4L322.8 132.6L328.8 129.7L334.8 126.9L340.8 124.0L346.8 121.2L352.8 118.3L358.8 115.5L364.9 112.7L370.9 109.8L376.9 107.0L382.9 104.1L388.9 101.3L394.9 98.4L400.9 95.6L407.0 92.8L413.0 89.9L419.0 87.1L425.0 84.3"/><path d="M-2.0 285.7L4.0 282.9L10.0 280.1L16.0 277.3L22.1 274.5L28.1 271.7L34.1 269.0L40.1 266.2L46.1 263.4L52.1 260.6L58.1 257.8L64.2 255.1L70.2 252.3L76.2 249.5L82.2 246.7L88.2 243.9L94.2 241.2L100.2 238.4L106.3 235.5L112.3 232.7L118.3 229.8L124.3 226.9L130.3 224.0L136.3 221.1L142.3 218.2L148.4 215.3L154.4 212.4L160.4 209.4L166.4 206.5L172.4 203.5L178.4 200.5L184.4 197.5L190.5 194.5L196.5 191.5L202.5 188.5L208.5 185.5L214.5 182.5L220.5 179.5L226.5 176.5L232.5 173.5L238.6 170.5L244.6 167.5L250.6 164.5L256.6 161.5L262.6 158.5L268.6 155.5L274.6 152.5L280.7 149.5L286.7 146.6L292.7 143.6L298.7 140.7L304.7 137.7L310.7 134.8L316.7 131.8L322.8 128.9L328.8 125.9L334.8 123.0L340.8 120.0L346.8 117.1L352.8 114.2L358.8 111.2L364.9 108.3L370.9 105.3L376.9 102.4L382.9 99.4L388.9 96.5L394.9 93.5L400.9 90.6L407.0 87.6L413.0 84.7L419.0 81.8L425.0 78.8"/><path d="M-2.0 287.9L4.0 285.0L10.0 282.0L16.0 279.1L22.1 276.2L28.1 273.3L34.1 270.4L40.1 267.5L46.1 264.5L52.1 261.6L58.1 258.7L64.2 255.8L70.2 252.9L76.2 250.0L82.2 247.1L88.2 244.2L94.2 241.3L100.2 238.3L106.3 235.4L112.3 232.4L118.3 229.4L124.3 226.4L130.3 223.4L136.3 220.4L142.3 217.4L148.4 214.3L154.4 211.3L160.4 208.3L166.4 205.2L172.4 202.1L178.4 199.0L184.4 195.9L190.5 192.9L196.5 189.8L202.5 186.7L208.5 183.6L214.5 180.5L220.5 177.4L226.5 174.3L232.5 171.2L238.6 168.1L244.6 165.0L250.6 161.9L256.6 158.8L262.6 155.7L268.6 152.7L274.6 149.6L280.7 146.5L286.7 143.5L292.7 140.4L298.7 137.4L304.7 134.3L310.7 131.3L316.7 128.2L322.8 125.2L328.8 122.1L334.8 119.1L340.8 116.0L346.8 113.0L352.8 109.9L358.8 106.9L364.9 103.8L370.9 100.8L376.9 97.7L382.9 94.7L388.9 91.6L394.9 88.6L400.9 85.5L407.0 82.5L413.0 79.4L419.0 76.4L425.0 73.4"/><path d="M-2.0 290.0L4.0 287.0L10.0 283.9L16.0 280.8L22.1 277.8L28.1 274.7L34.1 271.7L40.1 268.6L46.1 265.6L52.1 262.5L58.1 259.5L64.2 256.4L70.2 253.4L76.2 250.3L82.2 247.3L88.2 244.2L94.2 241.2L100.2 238.1L106.3 235.0L112.3 232.0L118.3 228.8L124.3 225.7L130.3 222.6L136.3 219.5L142.3 216.4L148.4 213.2L154.4 210.1L160.4 207.0L166.4 203.8L172.4 200.6L178.4 197.5L184.4 194.3L190.5 191.1L196.5 187.9L202.5 184.7L208.5 181.6L214.5 178.4L220.5 175.2L226.5 172.0L232.5 168.8L238.6 165.7L244.6 162.5L250.6 159.3L256.6 156.1L262.6 152.9L268.6 149.8L274.6 146.6L280.7 143.4L286.7 140.3L292.7 137.1L298.7 134.0L304.7 130.8L310.7 127.7L316.7 124.5L322.8 121.4L328.8 118.2L334.8 115.1L340.8 111.9L346.8 108.8L352.8 105.7L358.8 102.5L364.9 99.4L370.9 96.2L376.9 93.1L382.9 89.9L388.9 86.8L394.9 83.6L400.9 80.5L407.0 77.3L413.0 74.2L419.0 71.0L425.0 67.9"/><path d="M-2.0 292.1L4.0 288.9L10.0 285.7L16.0 282.5L22.1 279.3L28.1 276.1L34.1 272.9L40.1 269.7L46.1 266.5L52.1 263.3L58.1 260.2L64.2 257.0L70.2 253.8L76.2 250.6L82.2 247.4L88.2 244.2L94.2 241.0L100.2 237.8L106.3 234.6L112.3 231.4L118.3 228.1L124.3 224.9L130.3 221.7L136.3 218.4L142.3 215.2L148.4 212.0L154.4 208.7L160.4 205.5L166.4 202.3L172.4 199.0L178.4 195.7L184.4 192.5L190.5 189.2L196.5 185.9L202.5 182.7L208.5 179.4L214.5 176.2L220.5 172.9L226.5 169.6L232.5 166.4L238.6 163.1L244.6 159.8L250.6 156.6L256.6 153.3L262.6 150.1L268.6 146.8L274.6 143.5L280.7 140.3L286.7 137.0L292.7 133.8L298.7 130.5L304.7 127.3L310.7 124.1L316.7 120.8L322.8 117.6L328.8 114.3L334.8 111.1L340.8 107.8L346.8 104.6L352.8 101.3L358.8 98.1L364.9 94.8L370.9 91.6L376.9 88.4L382.9 85.1L388.9 81.9L394.9 78.6L400.9 75.4L407.0 72.1L413.0 68.9L419.0 65.6L425.0 62.4"/></g>
<g stroke="#d0d8e8" stroke-width="1.0" fill="none"><path d="M-2.0 299.7L4.0 300.4L10.0 301.0L16.0 301.3L22.1 301.5L28.1 301.5L34.1 301.3L40.1 300.9L46.1 300.4L52.1 299.8L58.1 299.0L64.2 298.1L70.2 297.0L76.2 295.9L82.2 294.7L88.2 293.4L94.2 292.0L100.2 290.5L106.3 288.9L112.3 287.3L118.3 285.6L124.3 283.8L130.3 282.0L136.3 280.2L142.3 278.3L148.4 276.4L154.4 274.4L160.4 272.4L166.4 270.4L172.4 268.4L178.4 266.3L184.4 264.3L190.5 262.2L196.5 260.1L202.5 258.0L208.5 255.8L214.5 253.7L220.5 251.5L226.5 249.4L232.5 247.2L238.6 245.0L244.6 242.8L250.6 240.6L256.6 238.4L262.6 236.2L268.6 233.9L274.6 231.6L280.7 229.3L286.7 227.0L292.7 224.6L298.7 222.3L304.7 219.8L310.7 217.4L316.7 214.8L322.8 212.3L328.8 209.7L334.8 207.0L340.8 204.2L346.8 201.4L352.8 198.5L358.8 195.5L364.9 192.4L370.9 189.2L376.9 186.0L382.9 182.5L388.9 179.0L394.9 175.4L400.9 171.5L407.0 167.6L413.0 163.5L419.0 159.2L425.0 154.7"/><path d="M-2.0 367.7L4.0 365.5L10.0 363.3L16.0 361.0L22.1 358.7L28.1 356.4L34.1 354.1L40.1 351.7L46.1 349.3L52.1 346.9L58.1 344.4L64.2 341.9L70.2 339.3L76.2 336.7L82.2 334.1L88.2 331.4L94.2 328.6L100.2 325.8L106.3 322.9L112.3 320.0L118.3 317.0L124.3 313.9L130.3 310.8L136.3 307.7L142.3 304.4L148.4 301.2L154.4 297.8L160.4 294.4L166.4 290.9L172.4 287.3L178.4 283.7L184.4 280.0L190.5 276.3L196.5 272.5L202.5 268.6L208.5 264.7L214.5 260.7L220.5 256.6L226.5 252.5L232.5 248.3L238.6 244.0L244.6 239.7L250.6 235.3L256.6 230.9L262.6 226.4L268.6 221.9L274.6 217.3L280.7 212.6L286.7 207.9L292.7 203.2L298.7 198.4L304.7 193.6L310.7 188.7L316.7 183.8L322.8 178.8L328.8 173.8L334.8 168.8L340.8 163.8L346.8 158.7L352.8 153.6L358.8 148.5L364.9 143.4L370.9 138.3L376.9 133.1L382.9 128.0L388.9 122.8L394.9 117.7L400.9 112.6L407.0 107.4L413.0 102.3L419.0 97.2L425.0 92.2"/></g>
<g stroke="url(#yg)" stroke-width="0.8" fill="none"><path d="M-2.0 301.1L4.0 301.8L10.0 302.2L16.0 302.5L22.1 302.6L28.1 302.5L34.1 302.3L40.1 301.9L46.1 301.3L52.1 300.6L58.1 299.8L64.2 298.8L70.2 297.8L76.2 296.6L82.2 295.3L88.2 293.9L94.2 292.5L100.2 291.0L106.3 289.4L112.3 287.7L118.3 286.0L124.3 284.2L130.3 282.4L136.3 280.5L142.3 278.6L148.4 276.6L154.4 274.6L160.4 272.6L166.4 270.6L172.4 268.5L178.4 266.4L184.4 264.3L190.5 262.2L196.5 260.0L202.5 257.9L208.5 255.7L214.5 253.5L220.5 251.3L226.5 249.1L232.5 246.9L238.6 244.7L244.6 242.4L250.6 240.2L256.6 237.9L262.6 235.6L268.6 233.3L274.6 231.0L280.7 228.6L286.7 226.2L292.7 223.8L298.7 221.4L304.7 218.9L310.7 216.4L316.7 213.8L322.8 211.2L328.8 208.5L334.8 205.7L340.8 202.9L346.8 200.1L352.8 197.1L358.8 194.1L364.9 190.9L370.9 187.7L376.9 184.4L382.9 180.9L388.9 177.4L394.9 173.7L400.9 169.8L407.0 165.8L413.0 161.7L419.0 157.4L425.0 152.9"/><path d="M-2.0 305.2L4.0 305.7L10.0 306.0L16.0 306.0L22.1 306.0L28.1 305.7L34.1 305.3L40.1 304.7L46.1 304.0L52.1 303.1L58.1 302.2L64.2 301.1L70.2 299.9L76.2 298.6L82.2 297.2L88.2 295.7L94.2 294.2L100.2 292.5L106.3 290.8L112.3 289.0L118.3 287.2L124.3 285.3L130.3 283.4L136.3 281.4L142.3 279.4L148.4 277.4L154.4 275.3L160.4 273.2L166.4 271.0L172.4 268.9L178.4 266.7L184.4 264.4L190.5 262.2L196.5 259.9L202.5 257.7L208.5 255.4L214.5 253.1L220.5 250.7L226.5 248.4L232.5 246.0L238.6 243.7L244.6 241.3L250.6 238.9L256.6 236.4L262.6 234.0L268.6 231.5L274.6 229.0L280.7 226.5L286.7 224.0L292.7 221.4L298.7 218.8L304.7 216.1L310.7 213.5L316.7 210.7L322.8 207.9L328.8 205.1L334.8 202.2L340.8 199.2L346.8 196.2L352.8 193.1L358.8 189.9L364.9 186.7L370.9 183.3L376.9 179.8L382.9 176.3L388.9 172.6L394.9 168.8L400.9 164.8L407.0 160.8L413.0 156.6L419.0 152.2L425.0 147.7"/><path d="M-2.0 309.4L4.0 309.7L10.0 309.7L16.0 309.6L22.1 309.3L28.1 308.9L34.1 308.3L40.1 307.6L46.1 306.8L52.1 305.8L58.1 304.7L64.2 303.5L70.2 302.1L76.2 300.7L82.2 299.2L88.2 297.6L94.2 295.9L100.2 294.2L106.3 292.4L112.3 290.5L118.3 288.6L124.3 286.6L130.3 284.6L136.3 282.5L142.3 280.4L148.4 278.3L154.4 276.1L160.4 273.9L166.4 271.6L172.4 269.4L178.4 267.0L184.4 264.7L190.5 262.4L196.5 260.0L202.5 257.6L208.5 255.2L214.5 252.7L220.5 250.3L226.5 247.8L232.5 245.3L238.6 242.8L244.6 240.3L250.6 237.7L256.6 235.1L262.6 232.5L268.6 229.9L274.6 227.3L280.7 224.6L286.7 221.9L292.7 219.1L298.7 216.4L304.7 213.6L310.7 210.7L316.7 207.8L322.8 204.9L328.8 201.9L334.8 198.8L340.8 195.7L346.8 192.5L352.8 189.3L358.8 185.9L364.9 182.5L370.9 179.0L376.9 175.4L382.9 171.8L388.9 168.0L394.9 164.1L400.9 160.0L407.0 155.9L413.0 151.6L419.0 147.2L425.0 142.6"/><path d="M-2.0 313.6L4.0 313.7L10.0 313.6L16.0 313.3L22.1 312.8L28.1 312.2L34.1 311.5L40.1 310.6L46.1 309.6L52.1 308.5L58.1 307.2L64.2 305.9L70.2 304.5L76.2 302.9L82.2 301.3L88.2 299.6L94.2 297.8L100.2 296.0L106.3 294.0L112.3 292.1L118.3 290.0L124.3 288.0L130.3 285.9L136.3 283.7L142.3 281.5L148.4 279.3L154.4 277.0L160.4 274.7L166.4 272.4L172.4 270.0L178.4 267.6L184.4 265.1L190.5 262.7L196.5 260.2L202.5 257.6L208.5 255.1L214.5 252.5L220.5 250.0L226.5 247.4L232.5 244.7L238.6 242.1L244.6 239.4L250.6 236.7L256.6 234.0L262.6 231.2L268.6 228.4L274.6 225.6L280.7 222.8L286.7 219.9L292.7 217.0L298.7 214.1L304.7 211.1L310.7 208.1L316.7 205.1L322.8 202.0L328.8 198.8L334.8 195.6L340.8 192.3L346.8 189.0L352.8 185.6L358.8 182.1L364.9 178.6L370.9 174.9L376.9 171.2L382.9 167.4L388.9 163.5L394.9 159.5L400.9 155.4L407.0 151.1L413.0 146.8L419.0 142.3L425.0 137.7"/><path d="M-2.0 317.9L4.0 317.7L10.0 317.4L16.0 316.9L22.1 316.3L28.1 315.6L34.1 314.7L40.1 313.6L46.1 312.5L52.1 311.2L58.1 309.9L64.2 308.4L70.2 306.9L76.2 305.2L82.2 303.5L88.2 301.7L94.2 299.8L100.2 297.8L106.3 295.8L112.3 293.8L118.3 291.6L124.3 289.5L130.3 287.3L136.3 285.0L142.3 282.8L148.4 280.4L154.4 278.1L160.4 275.7L166.4 273.2L172.4 270.7L178.4 268.2L184.4 265.7L190.5 263.1L196.5 260.5L202.5 257.8L208.5 255.2L214.5 252.5L220.5 249.8L226.5 247.0L232.5 244.3L238.6 241.5L244.6 238.7L250.6 235.8L256.6 232.9L262.6 230.0L268.6 227.1L274.6 224.2L280.7 221.2L286.7 218.1L292.7 215.1L298.7 212.0L304.7 208.9L310.7 205.7L316.7 202.5L322.8 199.2L328.8 195.9L334.8 192.5L340.8 189.1L346.8 185.6L352.8 182.1L358.8 178.4L364.9 174.8L370.9 171.0L376.9 167.2L382.9 163.2L388.9 159.2L394.9 155.1L400.9 150.9L407.0 146.6L413.0 142.2L419.0 137.6L425.0 133.0"/><path d="M-2.0 322.2L4.0 321.8L10.0 321.3L16.0 320.7L22.1 319.9L28.1 319.0L34.1 317.9L40.1 316.8L46.1 315.5L52.1 314.1L58.1 312.6L64.2 311.0L70.2 309.4L76.2 307.6L82.2 305.8L88.2 303.9L94.2 301.9L100.2 299.8L106.3 297.7L112.3 295.6L118.3 293.4L124.3 291.1L130.3 288.8L136.3 286.5L142.3 284.1L148.4 281.7L154.4 279.2L160.4 276.7L166.4 274.2L172.4 271.6L178.4 269.0L184.4 266.3L190.5 263.6L196.5 260.9L202.5 258.2L208.5 255.4L214.5 252.6L220.5 249.7L226.5 246.9L232.5 244.0L238.6 241.0L244.6 238.1L250.6 235.1L256.6 232.1L262.6 229.0L268.6 225.9L274.6 222.8L280.7 219.7L286.7 216.5L292.7 213.3L298.7 210.0L304.7 206.7L310.7 203.4L316.7 200.0L322.8 196.6L328.8 193.1L334.8 189.6L340.8 186.0L346.8 182.4L352.8 178.7L358.8 174.9L364.9 171.1L370.9 167.2L376.9 163.3L382.9 159.2L388.9 155.1L394.9 150.9L400.9 146.6L407.0 142.2L413.0 137.7L419.0 133.1L425.0 128.4"/><path d="M-2.0 326.5L4.0 326.0L10.0 325.3L16.0 324.5L22.1 323.5L28.1 322.4L34.1 321.2L40.1 319.9L46.1 318.5L52.1 317.0L58.1 315.4L64.2 313.7L70.2 312.0L76.2 310.1L82.2 308.2L88.2 306.2L94.2 304.1L100.2 301.9L106.3 299.7L112.3 297.5L118.3 295.2L124.3 292.8L130.3 290.5L136.3 288.1L142.3 285.6L148.4 283.1L154.4 280.5L160.4 277.9L166.4 275.3L172.4 272.6L178.4 269.9L184.4 267.1L190.5 264.3L196.5 261.5L202.5 258.6L208.5 255.7L214.5 252.8L220.5 249.8L226.5 246.8L232.5 243.8L238.6 240.7L244.6 237.6L250.6 234.5L256.6 231.3L262.6 228.1L268.6 224.9L274.6 221.6L280.7 218.3L286.7 215.0L292.7 211.6L298.7 208.2L304.7 204.7L310.7 201.2L316.7 197.7L322.8 194.1L328.8 190.5L334.8 186.8L340.8 183.1L346.8 179.3L352.8 175.5L358.8 171.6L364.9 167.6L370.9 163.6L376.9 159.5L382.9 155.4L388.9 151.1L394.9 146.8L400.9 142.4L407.0 138.0L413.0 133.4L419.0 128.8L425.0 124.0"/><path d="M-2.0 330.9L4.0 330.2L10.0 329.3L16.0 328.3L22.1 327.2L28.1 326.0L34.1 324.6L40.1 323.2L46.1 321.7L52.1 320.0L58.1 318.3L64.2 316.5L70.2 314.7L76.2 312.7L82.2 310.7L88.2 308.6L94.2 306.4L100.2 304.1L106.3 301.9L112.3 299.5L118.3 297.1L124.3 294.7L130.3 292.3L136.3 289.8L142.3 287.2L148.4 284.6L154.4 281.9L160.4 279.3L166.4 276.5L172.4 273.7L178.4 270.9L184.4 268.0L190.5 265.1L196.5 262.2L202.5 259.2L208.5 256.2L214.5 253.1L220.5 250.0L226.5 246.9L232.5 243.7L238.6 240.5L244.6 237.3L250.6 234.0L256.6 230.7L262.6 227.4L268.6 224.0L274.6 220.6L280.7 217.1L286.7 213.6L292.7 210.1L298.7 206.5L304.7 202.9L310.7 199.2L316.7 195.6L322.8 191.8L328.8 188.0L334.8 184.2L340.8 180.3L346.8 176.4L352.8 172.4L358.8 168.4L364.9 164.3L370.9 160.1L376.9 155.9L382.9 151.7L388.9 147.3L394.9 142.9L400.9 138.5L407.0 133.9L413.0 129.3L419.0 124.6L425.0 119.8"/><path d="M-2.0 335.4L4.0 334.5L10.0 333.4L16.0 332.2L22.1 330.9L28.1 329.6L34.1 328.1L40.1 326.5L46.1 324.9L52.1 323.1L58.1 321.3L64.2 319.4L70.2 317.4L76.2 315.4L82.2 313.3L88.2 311.1L94.2 308.8L100.2 306.5L106.3 304.1L112.3 301.7L118.3 299.2L124.3 296.7L130.3 294.2L136.3 291.6L142.3 288.9L148.4 286.2L154.4 283.5L160.4 280.7L166.4 277.9L172.4 275.0L178.4 272.1L184.4 269.1L190.5 266.1L196.5 263.0L202.5 259.9L208.5 256.8L214.5 253.6L220.5 250.4L226.5 247.1L232.5 243.8L238.6 240.5L244.6 237.1L250.6 233.7L256.6 230.2L262.6 226.7L268.6 223.2L274.6 219.6L280.7 216.0L286.7 212.4L292.7 208.7L298.7 205.0L304.7 201.2L310.7 197.4L316.7 193.5L322.8 189.7L328.8 185.7L334.8 181.7L340.8 177.7L346.8 173.6L352.8 169.5L358.8 165.3L364.9 161.1L370.9 156.8L376.9 152.5L382.9 148.1L388.9 143.7L394.9 139.2L400.9 134.6L407.0 130.0L413.0 125.3L419.0 120.6L425.0 115.8"/><path d="M-2.0 339.9L4.0 338.8L10.0 337.5L16.0 336.2L22.1 334.7L28.1 333.2L34.1 331.6L40.1 329.9L46.1 328.1L52.1 326.3L58.1 324.4L64.2 322.4L70.2 320.3L76.2 318.1L82.2 315.9L88.2 313.7L94.2 311.3L100.2 308.9L106.3 306.4L112.3 303.9L118.3 301.4L124.3 298.8L130.3 296.2L136.3 293.5L142.3 290.8L148.4 288.0L154.4 285.2L160.4 282.3L166.4 279.3L172.4 276.4L178.4 273.3L184.4 270.3L190.5 267.1L196.5 264.0L202.5 260.8L208.5 257.5L214.5 254.2L220.5 250.9L226.5 247.5L232.5 244.1L238.6 240.6L244.6 237.1L250.6 233.5L256.6 229.9L262.6 226.3L268.6 222.6L274.6 218.9L280.7 215.1L286.7 211.3L292.7 207.5L298.7 203.6L304.7 199.7L310.7 195.7L316.7 191.7L322.8 187.7L328.8 183.6L334.8 179.4L340.8 175.3L346.8 171.0L352.8 166.8L358.8 162.5L364.9 158.1L370.9 153.7L376.9 149.3L382.9 144.8L388.9 140.2L394.9 135.6L400.9 131.0L407.0 126.3L413.0 121.5L419.0 116.7L425.0 111.9"/><path d="M-2.0 344.4L4.0 343.1L10.0 341.7L16.0 340.2L22.1 338.6L28.1 336.9L34.1 335.2L40.1 333.4L46.1 331.5L52.1 329.5L58.1 327.5L64.2 325.4L70.2 323.2L76.2 321.0L82.2 318.7L88.2 316.4L94.2 313.9L100.2 311.4L106.3 308.9L112.3 306.3L118.3 303.7L124.3 301.0L130.3 298.3L136.3 295.6L142.3 292.7L148.4 289.9L154.4 287.0L160.4 284.0L166.4 281.0L172.4 277.9L178.4 274.8L184.4 271.6L190.5 268.3L196.5 265.1L202.5 261.7L208.5 258.4L214.5 255.0L220.5 251.5L226.5 248.0L232.5 244.4L238.6 240.8L244.6 237.2L250.6 233.5L256.6 229.7L262.6 225.9L268.6 222.1L274.6 218.2L280.7 214.3L286.7 210.4L292.7 206.4L298.7 202.4L304.7 198.3L310.7 194.2L316.7 190.0L322.8 185.8L328.8 181.6L334.8 177.3L340.8 173.0L346.8 168.6L352.8 164.2L358.8 159.7L364.9 155.3L370.9 150.7L376.9 146.2L382.9 141.6L388.9 136.9L394.9 132.2L400.9 127.5L407.0 122.7L413.0 117.9L419.0 113.1L425.0 108.2"/><path d="M-2.0 349.0L4.0 347.5L10.0 345.9L16.0 344.2L22.1 342.5L28.1 340.7L34.1 338.8L40.1 336.9L46.1 334.9L52.1 332.9L58.1 330.7L64.2 328.5L70.2 326.3L76.2 324.0L82.2 321.6L88.2 319.1L94.2 316.6L100.2 314.1L106.3 311.5L112.3 308.8L118.3 306.1L124.3 303.4L130.3 300.6L136.3 297.7L142.3 294.8L148.4 291.9L154.4 288.9L160.4 285.8L166.4 282.7L172.4 279.5L178.4 276.3L184.4 273.0L190.5 269.7L196.5 266.3L202.5 262.9L208.5 259.4L214.5 255.8L220.5 252.2L226.5 248.6L232.5 244.9L238.6 241.2L244.6 237.4L250.6 233.6L256.6 229.7L262.6 225.8L268.6 221.8L274.6 217.8L280.7 213.7L286.7 209.6L292.7 205.5L298.7 201.3L304.7 197.0L310.7 192.8L316.7 188.5L322.8 184.1L328.8 179.7L334.8 175.3L340.8 170.8L346.8 166.3L352.8 161.8L358.8 157.2L364.9 152.6L370.9 147.9L376.9 143.2L382.9 138.5L388.9 133.8L394.9 129.0L400.9 124.2L407.0 119.3L413.0 114.5L419.0 109.6L425.0 104.6"/><path d="M-2.0 353.6L4.0 351.9L10.0 350.2L16.0 348.4L22.1 346.5L28.1 344.6L34.1 342.6L40.1 340.5L46.1 338.4L52.1 336.2L58.1 334.0L64.2 331.7L70.2 329.4L76.2 327.0L82.2 324.6L88.2 322.0L94.2 319.5L100.2 316.8L106.3 314.2L112.3 311.4L118.3 308.7L124.3 305.8L130.3 303.0L136.3 300.0L142.3 297.1L148.4 294.0L154.4 290.9L160.4 287.8L166.4 284.6L172.4 281.3L178.4 278.0L184.4 274.6L190.5 271.1L196.5 267.6L202.5 264.1L208.5 260.5L214.5 256.8L220.5 253.1L226.5 249.4L232.5 245.5L238.6 241.7L244.6 237.8L250.6 233.8L256.6 229.8L262.6 225.7L268.6 221.6L274.6 217.4L280.7 213.2L286.7 209.0L292.7 204.7L298.7 200.3L304.7 195.9L310.7 191.5L316.7 187.1L322.8 182.6L328.8 178.0L334.8 173.4L340.8 168.8L346.8 164.2L352.8 159.5L358.8 154.8L364.9 150.0L370.9 145.3L376.9 140.5L382.9 135.6L388.9 130.8L394.9 125.9L400.9 121.0L407.0 116.1L413.0 111.2L419.0 106.2L425.0 101.3"/><path d="M-2.0 358.3L4.0 356.4L10.0 354.5L16.0 352.5L22.1 350.5L28.1 348.5L34.1 346.3L40.1 344.2L46.1 342.0L52.1 339.7L58.1 337.4L64.2 335.0L70.2 332.6L76.2 330.2L82.2 327.6L88.2 325.0L94.2 322.4L100.2 319.7L106.3 317.0L112.3 314.2L118.3 311.3L124.3 308.4L130.3 305.5L136.3 302.5L142.3 299.4L148.4 296.3L154.4 293.1L160.4 289.8L166.4 286.5L172.4 283.2L178.4 279.8L184.4 276.3L190.5 272.7L196.5 269.1L202.5 265.5L208.5 261.8L214.5 258.0L220.5 254.1L226.5 250.3L232.5 246.3L238.6 242.3L244.6 238.3L250.6 234.2L256.6 230.0L262.6 225.8L268.6 221.5L274.6 217.2L280.7 212.9L286.7 208.5L292.7 204.0L298.7 199.5L304.7 195.0L310.7 190.4L316.7 185.8L322.8 181.2L328.8 176.5L334.8 171.7L340.8 167.0L346.8 162.2L352.8 157.4L358.8 152.5L364.9 147.7L370.9 142.8L376.9 137.9L382.9 132.9L388.9 128.0L394.9 123.0L400.9 118.0L407.0 113.0L413.0 108.1L419.0 103.1L425.0 98.1"/><path d="M-2.0 363.0L4.0 360.9L10.0 358.9L16.0 356.7L22.1 354.6L28.1 352.4L34.1 350.2L40.1 347.9L46.1 345.6L52.1 343.3L58.1 340.9L64.2 338.4L70.2 335.9L76.2 333.4L82.2 330.8L88.2 328.1L94.2 325.4L100.2 322.7L106.3 319.9L112.3 317.0L118.3 314.1L124.3 311.1L130.3 308.1L136.3 305.0L142.3 301.9L148.4 298.7L154.4 295.4L160.4 292.0L166.4 288.7L172.4 285.2L178.4 281.7L184.4 278.1L190.5 274.4L196.5 270.7L202.5 267.0L208.5 263.1L214.5 259.3L220.5 255.3L226.5 251.3L232.5 247.2L238.6 243.1L244.6 238.9L250.6 234.7L256.6 230.4L262.6 226.0L268.6 221.6L274.6 217.2L280.7 212.7L286.7 208.1L292.7 203.5L298.7 198.9L304.7 194.2L310.7 189.5L316.7 184.7L322.8 179.9L328.8 175.1L334.8 170.2L340.8 165.3L346.8 160.4L352.8 155.4L358.8 150.5L364.9 145.5L370.9 140.4L376.9 135.4L382.9 130.4L388.9 125.3L394.9 120.3L400.9 115.2L407.0 110.2L413.0 105.1L419.0 100.1L425.0 95.0"/></g>
<circle cx="176.40" cy="233.60" r="6.6" fill="#8c1010"/>
<text x="177.60" y="146" font-family="Liberation Sans, sans-serif" font-style="italic" font-size="8" fill="#2a3cf0" text-anchor="middle">z</text>
<text x="266" y="233" font-family="Liberation Sans, sans-serif" font-style="italic" font-size="5" fill="#30d030" text-anchor="middle">y</text>
</svg>
</div>
<div id="btoolbar" class="abs">
<div class="abs" style="left:36.6px;width:6.0px;top:1px;height:23px;background:linear-gradient(90deg,#9c9ca0,#d8d8da)"></div>
<div class="abs" style="left:106.4px;width:6.3px;top:1px;height:23px;background:linear-gradient(90deg,#9c9ca0,#d8d8da)"></div>
<div class="abs" style="left:155.5px;width:6.5px;top:1px;height:23px;background:linear-gradient(90deg,#9c9ca0,#d8d8da)"></div>
<div class="abs" style="left:241.0px;width:6.7px;top:1px;height:23px;background:linear-gradient(90deg,#9c9ca0,#d8d8da)"></div>
<div class="abs" style="left:291.6px;width:5.1px;top:1px;height:23px;background:linear-gradient(90deg,#9c9ca0,#d8d8da)"></div>
<div class="abs" style="left:419.2px;width:3.8px;top:1px;height:23px;background:linear-gradient(90deg,#9c9ca0,#d8d8da)"></div>
<div class="bb flat" style="left:-0.6px;width:21.8px;top:1.8px;height:21.5px"></div>
<div class="bb dd" style="left:21.2px;width:15.6px;top:1.8px;height:21.5px"></div>
<div class="bb " style="left:42.6px;width:21.4px;top:1.8px;height:21.5px"></div>
<div class="bb " style="left:64.0px;width:21.8px;top:1.8px;height:21.5px"></div>
<div class="bb on" style="left:85.8px;width:20.6px;top:1.8px;height:21.5px"></div>
<div class="bb " style="left:112.7px;width:21.8px;top:1.8px;height:21.5px"></div>
<div class="bb on" style="left:134.5px;width:21.0px;top:1.8px;height:21.5px"></div>
<div class="bb on" style="left:162.0px;width:21.4px;top:1.8px;height:21.5px"></div>
<div class="bb " style="left:183.4px;width:21.3px;top:1.8px;height:21.5px"></div>
<div class="bb flat" style="left:204.7px;width:22.0px;top:1.8px;height:21.5px"></div>
<div class="bb dd" style="left:226.7px;width:14.3px;top:1.8px;height:21.5px"></div>
<div class="bb " style="left:247.7px;width:21.9px;top:1.8px;height:21.5px"></div>
<div class="bb " style="left:269.6px;width:22.0px;top:1.8px;height:21.5px"></div>
<div class="bb flat" style="left:296.7px;width:20.6px;top:1.8px;height:21.5px"></div>
<div class="bb dd" style="left:317.3px;width:14.2px;top:1.8px;height:21.5px"></div>
<div class="bb " style="left:331.5px;width:22.5px;top:1.8px;height:21.5px"></div>
<div class="bb " style="left:354.0px;width:22.0px;top:1.8px;height:21.5px"></div>
<div class="bb " style="left:376.0px;width:21.8px;top:1.8px;height:21.5px"></div>
<div class="bb " style="left:397.8px;width:21.4px;top:1.8px;height:21.5px"></div>
<svg class="abs" style="left:0;top:0" width="423" height="24" viewBox="285 543 423 24">
<circle cx="295.6" cy="555.2" r="2" fill="#ee1515"/>
<path d="M311.8 554.4l2.4 2.4 2.4-2.4" fill="none" stroke="#2f4262" stroke-width="1.25"/>
<path d="M334.7 549l2.8 6.6h-5.6z" fill="none" stroke="#7d879b" stroke-width="1.1"/>
<rect x="339.5" y="549.6" width="4.6" height="5.4" rx="1" fill="none" stroke="#7d879b" stroke-width="1.1"/><ellipse cx="341.8" cy="549.8" rx="2.3" ry="1" fill="#f4f4f6" stroke="#7d879b" stroke-width="0.88"/>
<circle cx="338.3" cy="559.4" r="2.5" fill="none" stroke="#7d879b" stroke-width="1.1"/>
<path d="M356.2 549l2.8 6.6h-5.6z" fill="none" stroke="#3c4658" stroke-width="1.3"/>
<rect x="361.0" y="549.6" width="4.6" height="5.4" rx="1" fill="none" stroke="#3c4658" stroke-width="1.3"/><ellipse cx="363.3" cy="549.8" rx="2.3" ry="1" fill="#f4f4f6" stroke="#3c4658" stroke-width="1.04"/>
<circle cx="359.8" cy="559.4" r="2.5" fill="none" stroke="#3c4658" stroke-width="1.3"/>
<path d="M381 548.6l6.3 3.15l-6.3 3.15l-6.3 -3.15z" fill="#fbfbfd" stroke="#8a93a6" stroke-width=".7"/><path d="M374.7 551.75l6.3 3.15v7.35l-6.3 -3.15z" fill="#f0f1f5" stroke="#8a93a6" stroke-width=".7"/><path d="M387.3 551.75l-6.3 3.15v7.35l6.3 -3.15z" fill="#dfe2e9" stroke="#8a93a6" stroke-width=".7"/>
<path d="M408.6 548.4l6.3 3.15l-6.3 3.15l-6.3 -3.15zM402.3 551.55l6.3 3.15v7.35l-6.3 -3.15zM414.90 551.55l-6.3 3.15v7.35l6.3 -3.15z" fill="none" stroke="#8a93a6" stroke-width=".8"/>
<path d="M408.6 548.4v7.35l6.3 3.15M408.6 555.75l-6.3 3.15" fill="none" stroke="#a8b0c0" stroke-width=".6"/>
<path d="M430 548.6l6.3 3.15l-6.3 3.15l-6.3 -3.15z" fill="#f4f5f8"/><path d="M423.7 551.75l6.3 3.15v7.35l-6.3 -3.15z" fill="#4a5670"/><path d="M436.3 551.75l-6.3 3.15v7.35l6.3 -3.15z" fill="#929cb2"/>
<path d="M451.3 555.3h12.8M457.7 548.9v12.8" stroke="#4c586e" stroke-width="1.5"/>
<path d="M450.10 555.3l2.8-2.6v5.2zM465.3 555.3l-2.8-2.6v5.2zM457.7 547.70l-2.6 2.8h5.2zM457.7 562.9l-2.6-2.8h5.2z" fill="#4c586e"/>
<g transform="translate(479.4 554.4) scale(1.0)"><path d="M-4.60 0.4c-.2-1.6 1.6-2 2.2-.8l.2-3.2c.2-1.2 1.8-1.2 2 0l.2-.6c.4-1 1.8-.8 2 .2l.2.4c.6-.8 1.8-.4 1.8.6v4.6c0 3.4-1.6 4.80-4.4 4.80s-4-2-4.20-4z" fill="#fafafc" stroke="#6a7488" stroke-width=".8"/></g>
<g transform="translate(501 552.6) scale(0.9)"><path d="M-4.60 0.4c-.2-1.6 1.6-2 2.2-.8l.2-3.2c.2-1.2 1.8-1.2 2 0l.2-.6c.4-1 1.8-.8 2 .2l.2.4c.6-.8 1.8-.4 1.8.6v4.6c0 3.4-1.6 4.80-4.4 4.80s-4-2-4.20-4z" fill="#fafafc" stroke="#6a7488" stroke-width=".8"/></g>
<text x="500.8" y="564.4" font-family="Liberation Sans, sans-serif" font-size="4.6" font-weight="bold" fill="#555e70" text-anchor="middle" letter-spacing=".4">XYZ</text>
<path d="M516.4 554.4l2.4 2.4 2.4-2.4" fill="none" stroke="#2f4262" stroke-width="1.25"/>
<path d="M544 549.4v13" stroke="#4c586e" stroke-width="1.1"/>
<path d="M540.6 553.3A5.3 3.3 0 1 0 547.4 553.3" fill="none" stroke="#4c586e" stroke-width="1.2"/>
<path d="M542.8 552.9l-3.4 -1.6l0.6 3.6z" fill="#4c586e"/>
<path d="M565.8 549.4v13" stroke="#4c586e" stroke-width="1.1"/>
<path d="M562.4 553.3A5.3 3.3 0 1 0 569.20 553.3" fill="none" stroke="#4c586e" stroke-width="1.2"/>
<path d="M567.0 552.9l3.4 -1.6l-0.6 3.6z" fill="#4c586e"/>
<path d="M591.8 549.8v5.6l-3.6 4.6M591.8 555.4l5.2 1.4" fill="none" stroke="#4c586e" stroke-width="1.4" stroke-linecap="round"/>
<path d="M607.0 554.4l2.4 2.4 2.4-2.4" fill="none" stroke="#2f4262" stroke-width="1.25"/>
<circle cx="626.8" cy="553.8" r="4" fill="#f4f5f8" stroke="#6a7488" stroke-width="1.2"/>
<path d="M629.8 557l3.6 4" stroke="#5a6478" stroke-width="2" stroke-linecap="round"/>
<path d="M624.6 553.8h4.4" stroke="#3a4458" stroke-width="1.1"/>
<circle cx="649.0" cy="553.8" r="4" fill="#f4f5f8" stroke="#6a7488" stroke-width="1.2"/>
<path d="M652.0 557l3.6 4" stroke="#5a6478" stroke-width="2" stroke-linecap="round"/>
<path d="M646.80 553.8h4.4" stroke="#3a4458" stroke-width="1.1"/>
<path d="M649.0 551.6v4.4" stroke="#3a4458" stroke-width="1.1"/>
<circle cx="670.8" cy="553.8" r="4" fill="#f4f5f8" stroke="#6a7488" stroke-width="1.2"/>
<path d="M673.8 557l3.6 4" stroke="#5a6478" stroke-width="2" stroke-linecap="round"/>
<defs><linearGradient id="ft" x1="0" x2="1"><stop offset="0" stop-color="#f2f2f4"/><stop offset="1" stop-color="#8e929c"/></linearGradient></defs>
<rect x="688.9" y="551.70" width="9.2" height="7.2" rx="1" fill="url(#ft)" stroke="#5a6274" stroke-width=".9"/>
<path d="M686.1 548.5l3.2 0l-3.2 3.2z" fill="#2c3444"/>
<path d="M686.1 562.10l3.2 0l-3.2 -3.2z" fill="#2c3444"/>
<path d="M700.9 548.5l-3.2 0l3.2 3.2z" fill="#2c3444"/>
<path d="M700.9 562.10l-3.2 0l3.2 -3.2z" fill="#2c3444"/>
</svg>
</div>
</body>
</html>
